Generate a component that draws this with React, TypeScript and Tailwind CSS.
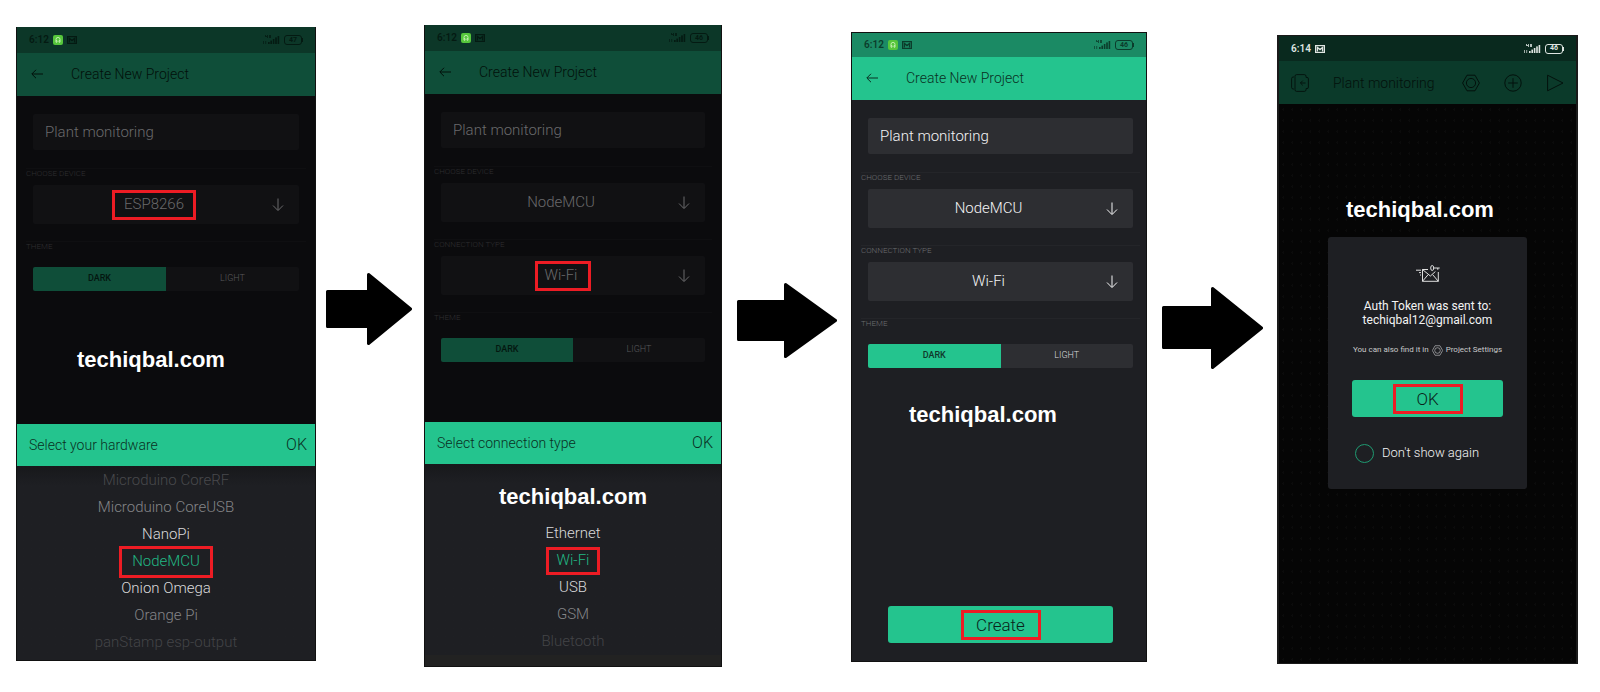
import { ReactNode, useState } from "react";

interface IPhoneColors {
  frame: string;
  status: string;
  statusText: string;
  header: string;
  headerText: string;
  field: string;
  text: string;
  label: string;
  active: string;
  activeText: string;
  idleText: string;
}

const bright: IPhoneColors = {
  frame: "bg-[#1e1f23]",
  status: "bg-[#1b8a64]",
  statusText: "text-[#0b3c2b]",
  header: "bg-[#24c48e]",
  headerText: "text-[#0a3023]",
  field: "bg-[#2d2e32]",
  text: "text-[#f4f4f5]",
  label: "text-[#6c6d70] border-[#242529]",
  active: "bg-[#24c48e]",
  activeText: "text-[#10382b]",
  idleText: "text-[#dadadb]",
};

const dimmed: IPhoneColors = {
  frame: "bg-[#0b0b0d]",
  status: "bg-[#0c3728]",
  statusText: "text-[#041a12]",
  header: "bg-[#0f4e39]",
  headerText: "text-[#02100a]",
  field: "bg-[#111113]",
  text: "text-[#6a6a6c]",
  label: "text-[#2e2e30] border-[#0f0f11]",
  active: "bg-[#0f4e39]",
  activeText: "text-[#041710]",
  idleText: "text-[#59595b]",
};

const Watermark = ({ className = "" }: { className?: string }) => (
  <p
    className={`font-['Liberation_Sans',sans-serif] text-[22px] leading-7 font-bold text-white ${className}`}
  >
    techiqbal.com
  </p>
);

// red frame drawn around the thing to tap
const Mark = ({ size, className = "" }: { size: string; className?: string }) => (
  <span
    className={`absolute inset-0 flex items-center justify-center pointer-events-none ${className}`}
  >
    <span className={`shrink-0 border-3 border-[#ed1c24] ${size}`} />
  </span>
);

const FlowArrow = ({
  className,
  viewBox,
  points,
}: {
  className: string;
  viewBox: string;
  points: string;
}) => (
  <div className={className}>
    <svg viewBox={viewBox} className="w-full" aria-hidden="true">
      <polygon
        points={points}
        fill="#000"
        stroke="#000"
        strokeWidth="3"
        strokeLinejoin="round"
      />
    </svg>
  </div>
);

const StatusBar = ({
  time,
  battery,
  colors,
  music = true,
  className = "",
}: {
  time: string;
  battery: string;
  colors: string;
  music?: boolean;
  className?: string;
}) => (
  <div className={`flex items-center px-3 ${colors} ${className}`}>
    <span className="text-[10px] leading-3 font-semibold">{time}</span>
    {music && (
      <svg viewBox="0 0 10 10" className="ml-1 size-[10px]" aria-hidden="true">
        <rect width="10" height="10" rx="2" fill="#56c63c" />
        <path
          d="M3 7.2V4.4a2 2 0 0 1 4 0v2.8M3 5.6h1v1.6H3M7 5.6H6v1.6h1"
          fill="none"
          stroke="#c9f2b8"
          strokeWidth="0.9"
        />
      </svg>
    )}
    <svg viewBox="0 0 10 8" className="ml-1 h-2 w-[10px]" aria-hidden="true">
      <rect x="0.6" y="0.6" width="8.8" height="6.8" fill="none" stroke="currentColor" strokeWidth="1.2" />
      <path d="M2.4 6.6V2.4L5 4.6 7.6 2.4v4.2" fill="none" stroke="currentColor" strokeWidth="1.4" />
    </svg>
    <svg viewBox="0 0 17 10" className="ml-auto h-[10px] w-[17px]" fill="currentColor" aria-hidden="true">
      <path d="M2 0h1v1h1V0h1v3H4V2H2zM6 0h2v3H6z" opacity="0.8" />
      <path d="M0 6h1v3H0zM2.2 6h1v3h-1z" opacity="0.7" />
      <rect x="5" y="7" width="1.6" height="2" />
      <rect x="7.4" y="5.6" width="1.6" height="3.4" />
      <rect x="9.8" y="4" width="1.6" height="5" />
      <rect x="12.2" y="2.4" width="1.6" height="6.6" />
      <rect x="14.6" y="1" width="1.6" height="8" />
    </svg>
    <span className="ml-1 flex items-center">
      <span className="flex h-[10px] w-[18px] items-center justify-center rounded-[3px] border border-current text-[7px] leading-none font-bold">
        {battery}
      </span>
      <span className="h-1 w-px bg-current" />
    </span>
  </div>
);

const Header = ({ colors }: { colors: IPhoneColors }) => (
  <header
    className={`flex h-[43px] items-center pb-0.5 pl-[14px] ${colors.header} ${colors.headerText}`}
  >
    <button type="button" aria-label="Back" className="mr-7">
      <svg viewBox="0 0 12 10" className="h-[10px] w-3" fill="none" stroke="currentColor" aria-hidden="true">
        <path d="M12 5H1M5 0.8L0.8 5 5 9.2" />
      </svg>
    </button>
    <h2 className="text-sm">Create New Project</h2>
  </header>
);

const SelectField = ({
  id,
  label,
  options,
  colors,
  children,
}: {
  id: string;
  label: string;
  options: string[];
  colors: IPhoneColors;
  children?: ReactNode;
}) => {
  const [value, setValue] = useState(options[0]);

  return (
    <div className={`mt-[17px] border-t ${colors.label}`}>
      <label htmlFor={id} className="block h-4 text-[8px] leading-[10px]">
        {label}
      </label>
      <div className={`relative mx-[7px] h-[39px] rounded-xs ${colors.field} ${colors.text}`}>
        <select
          id={id}
          value={value}
          onChange={(e) => setValue(e.target.value)}
          className="size-full appearance-none pr-6 text-center text-[15px]"
        >
          {options.map((option) => (
            <option key={option}>{option}</option>
          ))}
        </select>
        <svg
          viewBox="0 0 12 14"
          className="pointer-events-none absolute top-[13px] right-[15px] h-[14px] w-3"
          fill="none"
          stroke="currentColor"
          aria-hidden="true"
        >
          <path d="M6 0.5V12M1 7.5L6 12.6 11 7.5" />
        </svg>
        {children}
      </div>
    </div>
  );
};

const ProjectForm = ({
  id,
  colors,
  devices,
  deviceMark,
  connections,
  connectionMark,
  className = "px-[9px]",
}: {
  id: string;
  colors: IPhoneColors;
  devices: string[];
  deviceMark?: ReactNode;
  connections?: string[];
  connectionMark?: ReactNode;
  className?: string;
}) => {
  const [name, setName] = useState("Plant monitoring");
  const [theme, setTheme] = useState("DARK");

  return (
    <form className={`pt-[18px] ${className}`}>
      <div className="px-[7px] pb-px">
        <input
          type="text"
          aria-label="Project name"
          value={name}
          onChange={(e) => setName(e.target.value)}
          className={`h-9 w-full rounded-xs px-3 text-[15px] ${colors.field} ${colors.text}`}
        />
      </div>
      <SelectField id={`${id}-device`} label="CHOOSE DEVICE" options={devices} colors={colors}>
        {deviceMark}
      </SelectField>
      {connections && (
        <SelectField
          id={`${id}-connection`}
          label="CONNECTION TYPE"
          options={connections}
          colors={colors}
        >
          {connectionMark}
        </SelectField>
      )}
      <div className={`mt-[17px] border-t ${colors.label}`}>
        <p id={`${id}-theme`} className="h-[25px] text-[8px] leading-[10px]">
          THEME
        </p>
        <div
          role="group"
          aria-labelledby={`${id}-theme`}
          className={`mx-[7px] grid h-6 grid-cols-2 overflow-hidden rounded-xs text-[9px] ${colors.field}`}
        >
          {["DARK", "LIGHT"].map((item) => (
            <button
              key={item}
              type="button"
              onClick={() => setTheme(item)}
              className={
                theme === item
                  ? `font-medium ${colors.active} ${colors.activeText}`
                  : colors.idleText
              }
            >
              {item}
            </button>
          ))}
        </div>
      </div>
    </form>
  );
};

const SheetBar = ({ title }: { title: string }) => (
  <div className="flex h-[42px] items-center justify-between bg-[#24c48e] pr-2 pl-3 text-[#0a3023]">
    <h3 className="text-sm">{title}</h3>
    <button type="button" className="text-base">
      OK
    </button>
  </div>
);

const PickerList = ({
  items,
  mark,
}: {
  items: { name: string; color: string }[];
  mark: string;
}) => (
  <ul className="text-center text-[15px] leading-[27px]">
    {items.map((item) => (
      <li key={item.name} className={`relative ${item.color}`}>
        <button type="button">{item.name}</button>
        {item.color === "text-[#22b884]" && <Mark size={mark} />}
      </li>
    ))}
  </ul>
);

const hardware = [
  { name: "Microduino CoreRF", color: "text-[#48494c]" },
  { name: "Microduino CoreUSB", color: "text-[#848587]" },
  { name: "NanoPi", color: "text-[#dadadb]" },
  { name: "NodeMCU", color: "text-[#22b884]" },
  { name: "Onion Omega", color: "text-[#dadadb]" },
  { name: "Orange Pi", color: "text-[#848587]" },
  { name: "panStamp esp-output", color: "text-[#434447]" },
];

const connectionTypes = [
  { name: "Ethernet", color: "text-[#dadadb]" },
  { name: "Wi-Fi", color: "text-[#22b884]" },
  { name: "USB", color: "text-[#dadadb]" },
  { name: "GSM", color: "text-[#848587]" },
  { name: "Bluetooth", color: "text-[#434447]" },
];

const HardwareScreen = () => (
  <section className={`mt-[27px] border-x border-b border-[#111] ${dimmed.frame}`}>
    <StatusBar time="6:12" battery="47" colors={`${dimmed.status} ${dimmed.statusText}`} className="h-[26px]" />
    <Header colors={dimmed} />
    <ProjectForm
      id="hardware"
      colors={dimmed}
      devices={["ESP8266", "NodeMCU"]}
      deviceMark={<Mark size="h-[30px] w-[84px]" className="pr-6" />}
    />
    <Watermark className="pt-[55px] pb-[50px] pl-[60px]" />
    <SheetBar title="Select your hardware" />
    <div className="bg-linear-to-b from-[#17181b] to-[#1e1f23] to-10% pt-px pb-1">
      <PickerList items={hardware} mark="h-8 w-[94px]" />
    </div>
  </section>
);

const ConnectionScreen = () => (
  <section className={`mt-[25px] border-x border-b border-[#111] ${dimmed.frame}`}>
    <StatusBar time="6:12" battery="46" colors={`${dimmed.status} ${dimmed.statusText}`} className="h-[26px]" />
    <Header colors={dimmed} />
    <ProjectForm
      id="connection"
      colors={dimmed}
      devices={["NodeMCU", "ESP8266"]}
      connections={["Wi-Fi", "USB"]}
      connectionMark={<Mark size="h-[30px] w-14" className="pr-5" />}
      className="px-[9px] pb-[60px]"
    />
    <SheetBar title="Select connection type" />
    <div className="bg-linear-to-b from-[#17181b] to-[#1e1f23] to-10% pt-[19px]">
      <Watermark className="pb-[9px] text-center" />
      <PickerList items={connectionTypes} mark="h-7 w-[54px]" />
    </div>
    <div className="h-[11px] bg-[#222222]" />
  </section>
);

const CreateScreen = () => (
  <section className={`mt-8 border border-[#111] ${bright.frame}`}>
    <StatusBar time="6:12" battery="46" colors={`${bright.status} ${bright.statusText}`} className="h-6" />
    <Header colors={bright} />
    <ProjectForm
      id="create"
      colors={bright}
      devices={["NodeMCU", "ESP8266"]}
      connections={["Wi-Fi", "USB"]}
      className="pr-[6px] pl-[9px]"
    />
    <Watermark className="pt-[33px] pl-[57px]" />
    <div className="pt-[177px] pr-[33px] pb-[18px] pl-9">
      <button
        type="button"
        className="relative h-[37px] w-full rounded-[3px] bg-[#24c48e] text-[17px] leading-6 text-[#0a2219]"
      >
        Create
        <Mark size="h-[30px] w-20" />
      </button>
    </div>
  </section>
);

const NutIcon = ({ className }: { className: string }) => (
  <svg viewBox="0 0 18 18" className={className} fill="none" stroke="currentColor" aria-hidden="true">
    <path d="M5 1.2h8L17.4 9 13 16.8H5L0.6 9z" strokeLinejoin="round" />
    <circle cx="9" cy="9" r="4.6" />
  </svg>
);

const TokenScreen = () => {
  const [hidden, setHidden] = useState(false);

  return (
    <section className="mt-[35px] border-x-2 border-y border-[#1a1a1a] bg-[#050505]">
      <StatusBar time="6:14" battery="46" colors="bg-[#09291e] text-[#dfe5e2]" music={false} className="h-[25px]" />
      <header className="flex h-[43px] items-center bg-[#0b3a2a] pr-3 pl-3 text-[#03110c]">
        <button type="button" aria-label="Close project">
          <svg viewBox="0 0 18 18" className="size-[18px]" fill="none" stroke="currentColor" strokeWidth="0.9" aria-hidden="true">
            <path d="M3 3H2.2A1.6 1.6 0 0 0 0.6 4.6v8.8A1.6 1.6 0 0 0 2.2 15H3" />
            <path d="M15 3.4V2.2A1.6 1.6 0 0 0 13.4 0.6H5.6A1.6 1.6 0 0 0 4 2.2v13.6a1.6 1.6 0 0 0 1.6 1.6h7.8a1.6 1.6 0 0 0 1.6-1.6v-1.2" />
            <path d="M15 3.4h1a1.4 1.4 0 0 1 1.4 1.4v8.4a1.4 1.4 0 0 1-1.4 1.4h-1M14.5 9H9.5M11.8 6.6L9.4 9l2.4 2.4" />
          </svg>
        </button>
        <h2 className="ml-6 text-sm">Plant monitoring</h2>
        <div className="ml-auto flex items-center gap-6">
          <button type="button" aria-label="Project settings">
            <NutIcon className="size-[18px]" />
          </button>
          <button type="button" aria-label="Add widget">
            <svg viewBox="0 0 18 18" className="size-[18px]" fill="none" stroke="currentColor" aria-hidden="true">
              <circle cx="9" cy="9" r="8.2" />
              <path d="M9 4.2v9.6M4.2 9h9.6" />
            </svg>
          </button>
          <button type="button" aria-label="Play">
            <svg viewBox="0 0 18 18" className="size-[18px]" fill="none" stroke="currentColor" aria-hidden="true">
              <path d="M1.6 1.2v15.6L17 9z" strokeLinejoin="round" />
            </svg>
          </button>
        </div>
      </header>
      <div className="bg-[radial-gradient(#0b0b0b_1px,transparent_1px)] bg-size-[9px_11px] pt-[92px] pb-[174px]">
        <Watermark className="pl-[67px]" />
        <div
          role="dialog"
          aria-label="Auth Token"
          className="mx-[49px] mt-[13px] flex flex-col items-center rounded-[3px] bg-[#1e1f23] px-6 pt-7 pb-[26px] text-[#f4f4f4]"
        >
          <svg viewBox="0 0 24 18" className="h-[18px] w-6" fill="none" stroke="currentColor" strokeWidth="0.9" aria-hidden="true">
            <path d="M12 4.5H6.5v11.8h15.8V7" />
            <path d="M6.5 4.5l7.9 6.5 5-4.5M6.5 16.3l5.6-6.6M22.3 16.3l-5.6-6.6" />
            <path d="M0 5.2h5M3 7.6h2M4 10h1" />
            <ellipse cx="16.2" cy="3" rx="1.5" ry="2.5" />
            <path d="M17.7 3h6M21.8 3v1.8" />
          </svg>
          <p className="mt-4 text-center text-xs leading-[14px] font-normal whitespace-nowrap">
            Auth Token was sent to:
            <br />
            techiqbal12@gmail.com
          </p>
          <p className="mt-[17px] flex items-center text-[8px] leading-3 font-normal whitespace-nowrap text-[#c9c9ca]">
            You can also find it in
            <NutIcon className="mx-[3px] size-[11px]" />
            Project Settings
          </p>
          <button
            type="button"
            className="relative mt-6 h-[37px] w-full rounded-[3px] bg-[#24c48e] text-[17px] leading-6 text-[#0a2219]"
          >
            OK
            <Mark size="h-[30px] w-[70px]" />
          </button>
          <label className="mt-[26px] flex items-center gap-2 self-start pl-[3px] text-[13px] leading-5">
            <input
              type="checkbox"
              checked={hidden}
              onChange={(e) => setHidden(e.target.checked)}
              className="size-[19px] appearance-none rounded-full border border-[#1f9a71] checked:bg-[#24c48e]"
            />
            Don't show again
          </label>
        </div>
      </div>
    </section>
  );
};

const App = () => {
  return (
    <main className="grid min-h-screen grid-cols-[300fr_108fr_298fr_129fr_296fr_130fr_301fr] items-start bg-white pr-[22px] pb-4 pl-4 font-[Roboto,sans-serif] font-light">
      <HardwareScreen />
      <FlowArrow
        className="mt-[273px] pr-3 pl-[10px]"
        viewBox="0 0 86 72"
        points="1.5,18.5 42.5,18.5 42.5,1.5 84.5,36 42.5,70.5 42.5,53.5 1.5,53.5"
      />
      <ConnectionScreen />
      <FlowArrow
        className="mt-[283px] pr-[14px] pl-[15px]"
        viewBox="0 0 100 75"
        points="1.5,18.5 48.5,18.5 48.5,1.5 98.5,37.5 48.5,73.5 48.5,56.5 1.5,56.5"
      />
      <CreateScreen />
      <FlowArrow
        className="mt-[287px] pr-[14px] pl-[15px]"
        viewBox="0 0 101 82"
        points="1.5,20.5 50.5,20.5 50.5,1.5 99.5,41 50.5,80.5 50.5,60.5 1.5,60.5"
      />
      <TokenScreen />
    </main>
  );
};

export default App;
